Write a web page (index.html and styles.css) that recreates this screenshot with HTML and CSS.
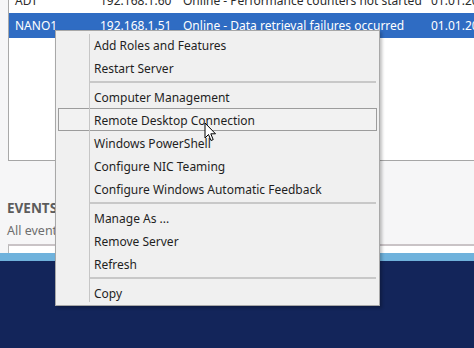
FILE: index.html
```html
<!DOCTYPE html>
<html lang="en">
<head>
  <meta charset="UTF-8" />
  <title>Server Manager - context menu</title>
  <link rel="stylesheet" href="styles.css">
</head>
<body>
  <div class="page">
    <div class="servers">
      <div class="row">
        <span class="col name">ADT</span>
        <span class="col ip">192.168.1.60</span>
        <span class="col status">Online - Performance counters not started</span>
        <span class="col date">01.01.2016</span>
      </div>
      <div class="row selected">
        <span class="col name">NANO1</span>
        <span class="col ip">192.168.1.51</span>
        <span class="col status">Online - Data retrieval failures occurred</span>
        <span class="col date">01.01.2016</span>
      </div>
    </div>

    <div class="events">
      <div class="events-title">EVENTS</div>
      <div class="events-sub">All events</div>
      <div class="events-box"></div>
    </div>

    <div class="taskbar">
      <div class="taskbar-edge"></div>
    </div>

    <ul class="menu">
      <li class="item">Add Roles and Features</li>
      <li class="item">Restart Server</li>
      <li class="sep"></li>
      <li class="item">Computer Management</li>
      <li class="item hover">Remote Desktop Connection</li>
      <li class="item">Windows PowerShell</li>
      <li class="item">Configure NIC Teaming</li>
      <li class="item">Configure Windows Automatic Feedback</li>
      <li class="sep"></li>
      <li class="item">Manage As ...</li>
      <li class="item">Remove Server</li>
      <li class="item">Refresh</li>
      <li class="sep"></li>
      <li class="item">Copy</li>
    </ul>

    <svg class="cursor" width="13" height="20" viewBox="0 0 13 20">
      <path d="M1 1 L1 16 L4.5 12.5 L7 18.5 L9.2 17.6 L6.8 11.8 L11.5 11.8 Z" fill="#fff" stroke="#000" stroke-width="1" stroke-linejoin="miter"/>
    </svg>
  </div>
</body>
</html>
```

FILE: styles.css
```css
* {
  box-sizing: border-box;
}
html, body {
  margin: 0;
  height: 100%;
  overflow: hidden;
}
body {
  font-family: 'Noto Sans', 'Open Sans', sans-serif;
  background: #f6f6f7;
}
.page {
  position: relative;
  width: 474px;
  height: 348px;
  display: flex;
  flex-direction: column;
}

/* server list */
.servers {
  margin-left: 8px;
  height: 161px;
  background: #fff;
  border-left: 1px solid #a9a9a9;
  border-bottom: 1px solid #a6a6a6;
  overflow: hidden;
}
.row {
  display: flex;
  height: 25px;
  align-items: center;
  font-size: 12px;
  color: #2b2b2b;
  white-space: nowrap;
}
.row:first-child {
  margin-top: -12px;
}
.row.selected {
  background: #2f6cc3;
  color: #fff;
}
.col {
  flex: none;
}
.name {
  width: 91px;
  padding-left: 6px;
}
.ip {
  width: 83px;
}
.status {
  width: 248px;
}

/* events */
.events {
  flex: 1;
  padding: 38px 0 0 7px;
  display: flex;
  flex-direction: column;
}
.events-title {
  font-size: 13.5px;
  font-weight: bold;
  color: #5c5c5c;
  line-height: 18px;
}
.events-sub {
  font-size: 12.5px;
  color: #6e6e6e;
  line-height: 18px;
  margin-top: 5px;
}
.events-box {
  flex: 1;
  margin: 4px 0 0 1px;
  background: #fff;
  border-top: 2px solid #c9c3c6;
  border-left: 1px solid #b9b9b9;
}

/* taskbar */
.taskbar {
  height: 95px;
  background: #13255a;
}
.taskbar-edge {
  height: 8px;
  background: #6fb2dc;
}

/* context menu */
.menu {
  position: absolute;
  left: 55px;
  top: 30px;
  width: 325px;
  margin: 0;
  padding: 2px 2px 1px 2px;
  list-style: none;
  background: #f0f0f0;
  border: 1px solid #a8a8a8;
  box-shadow: 2px 2px 3px rgba(0, 0, 0, 0.25);
  font-size: 12px;
  color: #1f1f1f;
}
.menu::before {
  content: "";
  position: absolute;
  left: 33px;
  top: 3px;
  bottom: 3px;
  border-left: 1px solid #c6c6c6;
}
.item {
  height: 23px;
  line-height: 23px;
  padding-left: 35px;
  border: 1px solid transparent;
  white-space: nowrap;
}
.item.hover {
  border-color: #9c9c9c;
  background: #f2f2f2;
}
.sep {
  height: 6px;
  margin-left: 31px;
  margin-right: 1px;
  padding-top: 2px;
}
.sep::after {
  content: "";
  display: block;
  border-top: 2px solid #c8c8c8;
}

.cursor {
  position: absolute;
  left: 204px;
  top: 122px;
}
```
